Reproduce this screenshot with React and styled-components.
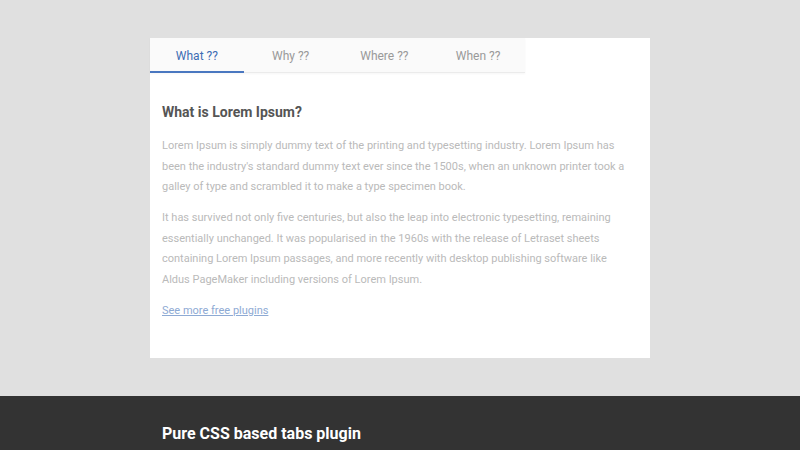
import styled, { createGlobalStyle } from "styled-components";

const Global = createGlobalStyle`
    body {
        margin: 0;
        background: #e0e0e0;
        font-family: Roboto, "Liberation Sans", sans-serif;
    }
`

const Page = styled.div`
    display: flex;
    flex-direction: column;
    align-items: center;
    padding-top: 38px;
`

const Card = styled.div`
    width: 500px;
    background: #fff;
    padding-bottom: 37px;
`

const TabBar = styled.div`
    display: flex;
    width: 375px;
    background: #fafafa;
    border-bottom: 1px solid #ebebeb;
    box-shadow: 0 1px 2px rgba(0,0,0,0.04);
`

const Tab = styled.div`
    flex: 1;
    height: 35px;
    padding-top: 1px;
    box-sizing: border-box;
    display: flex;
    align-items: center;
    justify-content: center;
    font-size: 12px;
    color: ${props => props.active ? "#3d6cb3" : "#999"};
    box-shadow: ${props => props.active ? "inset 0 -2px 0 #4a77c0" : "none"};
    margin-bottom: -1px;
`

const Body = styled.div`
    padding: 31px 23px 0 12px;
`

const Title = styled.h2`
    margin: 0 0 16px;
    font-size: 14px;
    font-weight: 700;
    color: #555;
`

const Para = styled.p`
    margin: 0 0 10.5px;
    font-size: 11px;
    line-height: 20.5px;
    color: #bababa;
`

const Link = styled.a`
    display: block;
    width: fit-content;
    margin-top: 11px;
    font-size: 11px;
    line-height: 20px;
    color: #8eaad4;
    text-decoration: underline;
`

const Footer = styled.div`
    margin-top: 38px;
    width: 100%;
    background: #333;
    display: flex;
    justify-content: center;
    padding: 28px 0 20px;
`

const FooterInner = styled.div`
    width: 476px;
    color: #fff;
    font-size: 16px;
    font-weight: 700;
`

const tabs = ["What ??", "Why ??", "Where ??", "When ??"]

export default function App(){
    return<>
        <Global />
        <Page>
            <Card>
                <TabBar>
                    {tabs.map((t, i) => <Tab key={t} active={i === 0 ? 1 : 0}>{t}</Tab>)}
                </TabBar>
                <Body>
                    <Title>What is Lorem Ipsum?</Title>
                    <Para>Lorem Ipsum is simply dummy text of the printing and typesetting industry. Lorem Ipsum has been the industry's standard dummy text ever since the 1500s, when an unknown printer took a galley of type and scrambled it to make a type specimen book.</Para>
                    <Para>It has survived not only five centuries, but also the leap into electronic typesetting, remaining essentially unchanged. It was popularised in the 1960s with the release of Letraset sheets containing Lorem Ipsum passages, and more recently with desktop publishing software like Aldus PageMaker including versions of Lorem Ipsum.</Para>
                    <Link href="#">See more free plugins</Link>
                </Body>
            </Card>
            <Footer>
                <FooterInner>Pure CSS based tabs plugin</FooterInner>
            </Footer>
        </Page>
    </>
}
